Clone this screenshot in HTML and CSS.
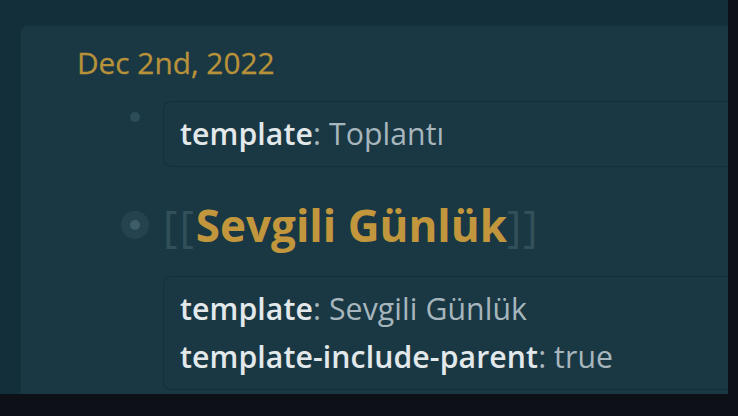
FILE: index.html
```html
<!DOCTYPE html>
<html lang="tr">
<head>
<meta charset="utf-8">
<title>Dec 2nd, 2022</title>
<link rel="stylesheet" href="styles.css">
</head>
<body>
<div class="app">
  <main class="card">
    <h1 class="date">Dec 2nd, 2022</h1>
    <div class="block">
      <div class="bullet-col"><span class="dot"></span></div>
      <div class="props">
        <div class="prop"><span class="key">template</span><span class="val">: Toplantı</span></div>
      </div>
    </div>
    <div class="block heading-block">
      <div class="bullet-col big"><span class="ring"><span class="dot"></span></span></div>
      <div class="heading"><span class="bracket">[[</span><span class="ref">Sevgili Günlük</span><span class="bracket">]]</span></div>
    </div>
    <div class="block">
      <div class="bullet-col empty"></div>
      <div class="props tall">
        <div class="prop"><span class="key">template</span><span class="val">: Sevgili Günlük</span></div>
        <div class="prop"><span class="key">template-include-parent</span><span class="val">: true</span></div>
      </div>
    </div>
  </main>
</div>
</body>
</html>
```
FILE: styles.css
```css
html, body {
  margin: 0;
  padding: 0;
  background: #0d1117;
  width: 738px;
  height: 416px;
  overflow: hidden;
}
.app {
  width: 728px;
  height: 394px;
  background: #132f3a;
  padding: 25px 0 0 20px;
  box-sizing: border-box;
  overflow: hidden;
  font-family: "Open Sans", "Noto Sans", sans-serif;
}
.card {
  height: 369px;
  background: #1a3844;
  border-top: 1px solid #17313c;
  border-left: 1px solid #17313c;
  border-top-left-radius: 7px;
  box-sizing: border-box;
  padding: 15px 0 0 56px;
  display: flex;
  flex-direction: column;
  overflow: hidden;
}
.date {
  margin: 0;
  font-size: 29.8px;
  font-weight: 400;
  line-height: 44px;
  color: #b8923a;
  letter-spacing: 0;
  -webkit-text-stroke: 0.3px #b8923a;
}
.block {
  display: flex;
  align-items: flex-start;
  margin-left: 44px;
  gap: 14px;
}
.date + .block { margin-top: 16px; }
.bullet-col {
  width: 28px;
  height: 32px;
  display: flex;
  align-items: center;
  justify-content: center;
  flex: none;
}
.dot {
  width: 10px;
  height: 10px;
  border-radius: 50%;
  background: #2d4d58;
}
.ring {
  width: 28px;
  height: 28px;
  border-radius: 50%;
  background: #24434e;
  display: flex;
  align-items: center;
  justify-content: center;
}
.ring .dot {
  background: #3d5d68;
}
.bullet-col.big { height: 60px; }
.props {
  flex: 1;
  border: 1px solid #13303a;
  border-right: none;
  border-radius: 8px 0 0 8px;
  padding: 0 16px;
  background: #1a3844;
}
.prop {
  line-height: 64px;
  font-size: 30.2px;
  white-space: nowrap;
  letter-spacing: 0.1px;
}
.props.tall { padding: 8px 16px; }
.props.tall .prop { line-height: 48px; }
.key {
  font-weight: 600;
  color: #e3e9eb;
}
.val {
  color: #a6b6bc;
}
.heading-block {
  margin-top: 28px;
  margin-bottom: 21px;
}
.heading {
  height: 60px;
  line-height: 60px;
  font-size: 44px;
  white-space: nowrap;
  letter-spacing: 0;
}
.bracket {
  color: #31505a;
  font-weight: 400;
  letter-spacing: 2px;
}
.ref {
  color: #c2963c;
  font-weight: 700;
}
```
